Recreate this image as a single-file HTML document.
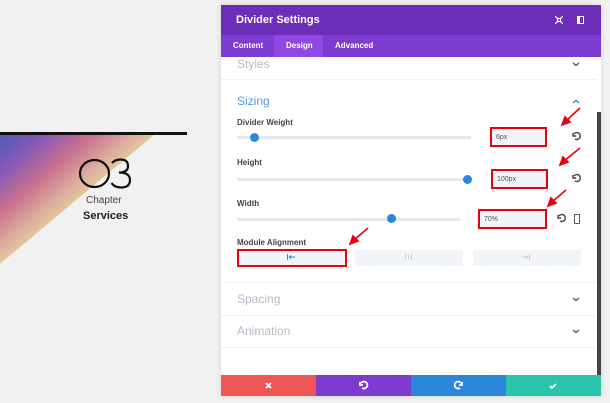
<!DOCTYPE html>
<html><head><style>
*{margin:0;padding:0;box-sizing:border-box}
body{width:610px;height:403px;background:#f1f1f1;font-family:"Liberation Sans",sans-serif;position:relative;overflow:hidden}
.a{position:absolute}
.lbl{font-size:8px;color:#444;font-weight:bold}
.sec{font-size:12px;color:#b4bcc6}
.track{height:3px;background:#e3e8ee;border-radius:2px}
.knob{width:9px;height:9px;border-radius:50%;background:#2b87da}
.inp{background:#f1f4f8;border:2px solid #e8000f;font-size:7px;color:#555;padding:5px 4px}
.btn{height:16px;background:#f1f4f8;border-radius:2px}
</style></head><body>
<div class="a" style="left:0;top:134px;width:190px;height:140px;background:linear-gradient(140deg,#4a5cb8 0%,#8a5ab5 14%,#c8708e 26%,#dcae9e 38%,#efe49a 50%,rgba(245,240,190,.4) 60%,rgba(241,241,241,0) 70%);clip-path:polygon(0 0,155px 0,0 130px)"></div>
<div class="a" style="left:0;top:132px;width:187px;height:3px;background:#111"></div>
<svg class="a" style="left:75px;top:155px" width="60" height="38" fill="none" stroke="#111" stroke-width="2.2">
<ellipse cx="19.5" cy="18.5" rx="14.5" ry="13.5"/>
<path d="M37 8 Q40 4.5 45.5 4.5 Q53 4.5 53 11 Q53 17.5 44 17.5 Q55 17.5 55 25 Q55 32.5 46 32.5 Q39.5 32.5 36.5 28"/>
</svg>
<div class="a" style="left:86px;top:195px;font-size:10px;color:#444">Chapter</div>
<div class="a" style="left:83px;top:210px;font-size:11px;color:#222;font-weight:bold">Services</div>

<div class="a" style="left:221px;top:5px;width:380px;height:391px;background:#fff;box-shadow:0 0 6px rgba(0,0,0,.12)"></div>
<div class="a" style="left:221px;top:5px;width:380px;height:30px;background:#6c2eb9"></div>
<div class="a" style="left:236px;top:14px;font-size:11px;color:#fff;font-weight:bold">Divider Settings</div>
<svg class="a" style="left:555px;top:16px" width="8" height="8" fill="none" stroke="#fff" stroke-width="1.2"><path d="M0 0L3 3M8 0L5 3M0 8L3 5M8 8L5 5"/><rect x="2.5" y="2.5" width="3" height="3"/></svg>
<div class="a" style="left:577px;top:16px;width:7px;height:8px;border:1.5px solid #fff;border-left-width:3px"></div>
<div class="a" style="left:221px;top:35px;width:380px;height:22px;background:#7e3bd0"></div>
<div class="a" style="left:274px;top:35px;width:49px;height:22px;background:#8f48e2"></div>
<div class="a" style="left:233px;top:41px;font-size:8px;color:#fff;font-weight:bold">Content</div>
<div class="a" style="left:286px;top:41px;font-size:8px;color:#fff;font-weight:bold">Design</div>
<div class="a" style="left:335px;top:41px;font-size:8px;color:#fff;font-weight:bold">Advanced</div>

<div class="a sec" style="left:237px;top:57px">Styles</div>
<div class="a" style="left:221px;top:79px;width:376px;height:1px;background:#eef0f3"></div>
<div class="a" style="left:237px;top:94px;font-size:12px;color:#5a9be0">Sizing</div>
<div class="a" style="left:597px;top:112px;width:4px;height:264px;background:#444"></div>

<div class="a lbl" style="left:237px;top:118px">Divider Weight</div>
<div class="a track" style="left:237px;top:136px;width:234px"></div>
<div class="a knob" style="left:250px;top:133px"></div>
<div class="a inp" style="left:490px;top:127px;width:57px;height:20px">6px</div>

<div class="a lbl" style="left:237px;top:158px">Height</div>
<div class="a track" style="left:237px;top:178px;width:234px"></div>
<div class="a knob" style="left:463px;top:175px"></div>
<div class="a inp" style="left:491px;top:169px;width:57px;height:20px">100px</div>

<div class="a lbl" style="left:237px;top:199px">Width</div>
<div class="a track" style="left:237px;top:218px;width:223px"></div>
<div class="a knob" style="left:387px;top:214px"></div>
<div class="a inp" style="left:478px;top:209px;width:69px;height:20px">70%</div>
<div class="a" style="left:574px;top:214px;width:6px;height:10px;border:1.5px solid #555;border-radius:1px"></div>

<div class="a lbl" style="left:237px;top:238px">Module Alignment</div>
<div class="a btn" style="left:237px;top:249px;width:110px;height:18px;border:2px solid #e8000f;border-radius:0"></div>
<div class="a btn" style="left:355px;top:250px;width:108px"></div>
<div class="a btn" style="left:473px;top:250px;width:108px"></div>
<svg class="a" style="left:0;top:0" width="610" height="403" fill="none">
<g stroke="#2b87da" stroke-width="1"><path d="M287.5 254v6M289 257h6M289 257l2-1.5M289 257l2 1.5"/></g>
<g stroke="#c8ccd2" stroke-width="1"><path d="M405.5 254v6M411.5 254v6M408.5 255v4"/><path d="M529.5 254v6M522 257h6M528 257l-2-1.5M528 257l-2 1.5"/></g>
<g stroke="#555" stroke-width="1.3"><path d="M573 63l3 2.5 3-2.5M573 298l3 2.5 3-2.5M573 330l3 2.5 3-2.5"/></g>
<path d="M573 103l3-2.5 3 2.5" stroke="#2b87da" stroke-width="1.3"/>
<g stroke="#444" stroke-width="1.4"><path d="M574 134a3.5 3.5 0 1 1 1 5M573 133v3h3"/><path d="M574 176a3.5 3.5 0 1 1 1 5M573 175v3h3"/><path d="M559 216a3.5 3.5 0 1 1 1 5M558 215v3h3"/></g>
<g stroke="#fff" stroke-width="1.5"><path d="M266 383l5 5M271 383l-5 5"/><path d="M360 383a3.5 3.5 0 1 1 1 5M359 382v3h3"/><path d="M461 383a3.5 3.5 0 1 0-1 5M462 382v3h-3"/><path d="M550 386l2 2 4-4"/></g>
<g stroke="#e8000f" stroke-width="1.6" fill="#e8000f">
<line x1="580" y1="108" x2="566" y2="121"/><polygon points="562,125 565,117 570,122"/>
<line x1="580" y1="148" x2="564" y2="161"/><polygon points="560,165 563,157 568,162"/>
<line x1="566" y1="190" x2="552" y2="202"/><polygon points="548,206 551,198 556,203"/>
<line x1="368" y1="228" x2="354" y2="240"/><polygon points="350,244 353,236 358,241"/>
</g></svg>
<div class="a sec" style="left:237px;top:292px">Spacing</div>
<div class="a sec" style="left:237px;top:324px">Animation</div>
<div class="a" style="left:221px;top:282px;width:376px;height:1px;background:#eef0f3"></div>
<div class="a" style="left:221px;top:315px;width:376px;height:1px;background:#eef0f3"></div>
<div class="a" style="left:221px;top:347px;width:376px;height:1px;background:#eef0f3"></div>
<div class="a" style="left:221px;top:375px;width:95px;height:21px;background:#ef5656;z-index:-0"></div>
<div class="a" style="left:316px;top:375px;width:95px;height:21px;background:#7e3bd0"></div>
<div class="a" style="left:411px;top:375px;width:95px;height:21px;background:#2b87da"></div>
<div class="a" style="left:506px;top:375px;width:95px;height:21px;background:#29c4a9"></div>
<svg class="a" style="left:0;top:0" width="610" height="403" fill="none">
<g stroke="#fff" stroke-width="1.8"><path d="M266 383l5 5M271 383l-5 5"/><path d="M361 383a3.5 3.5 0 1 1 1 5M360 382v3h3"/><path d="M461 383a3.5 3.5 0 1 0-1 5M462 382v3h-3"/><path d="M550 386l2 2 4-4"/></g></svg>
</body></html>
